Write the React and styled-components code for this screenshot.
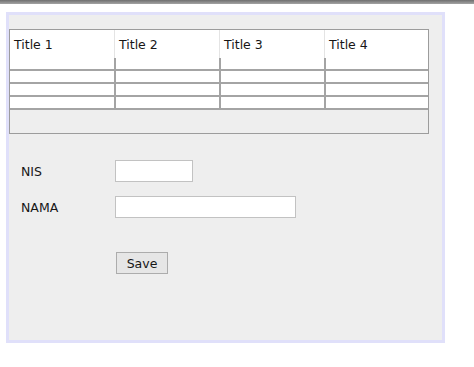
import React from 'react';
import styled, { createGlobalStyle } from 'styled-components';

const GlobalStyle = createGlobalStyle`
  html, body {
    margin: 0;
    padding: 0;
    background: #fff;
  }
  body {
    font-family: "DejaVu Sans", "Liberation Sans", sans-serif;
    font-size: 12.5px;
    color: #161616;
  }
`;

const TopBar = styled.div`
  height: 4px;
  background: linear-gradient(#6f6f6f, #a4a4a4);
`;

const Frame = styled.div`
  box-sizing: border-box;
  width: 439px;
  height: 331px;
  margin: 8px 0 0 6px;
  border: 3px solid #e0e0fa;
  background: #eeeeee;
  padding-top: 14px;
`;

const ScrollPane = styled.div`
  box-sizing: border-box;
  width: 420px;
  height: 105px;
  border: 1px solid #9c9c9c;
  background: #eeeeee;
`;

const Grid = styled.div`
  display: grid;
  grid-template-columns: 104px 105px 105px 104px;
`;

const HeadCell = styled.div`
  box-sizing: border-box;
  height: 28px;
  display: flex;
  align-items: center;
  padding-left: 4px;
  background: #fff;
  border-left: ${(p) => (p.first ? 'none' : '1px solid #e4e4e4')};
`;

const Cell = styled.div`
  box-sizing: border-box;
  height: 13px;
  background: #fff;
  border-bottom: 2px solid #a4a4a4;
  border-left: ${(p) => (p.first ? 'none' : '2px solid #a4a4a4')};
`;

const Form = styled.div`
  display: flex;
  flex-direction: column;
  gap: 14px;
  padding: 26px 0 0 12px;
`;

const Row = styled.div`
  display: grid;
  grid-template-columns: 94px auto;
  align-items: center;
`;

const Label = styled.span``;

const Input = styled.input`
  box-sizing: border-box;
  width: ${(p) => p.w}px;
  height: 22px;
  margin: 0;
  border: 1px solid #c2c2c2;
  background: #fff;
  outline: none;
`;

const ButtonRow = styled.div`
  padding: 20px 0 0 95px;
`;

const Button = styled.button`
  box-sizing: border-box;
  width: 52px;
  height: 22px;
  margin: 0;
  padding: 0;
  border: 1px solid #acacac;
  background: #e6e6e6;
  font-family: inherit;
  font-size: 12.5px;
  color: #161616;
`;

export default function App() {
  const titles = ['Title 1', 'Title 2', 'Title 3', 'Title 4'];
  const rows = [0, 1, 2, 3];

  return (
    <>
      <GlobalStyle />
      <TopBar />
      <Frame>
        <ScrollPane>
          <Grid>
            {titles.map((t, i) => (
              <HeadCell key={t} first={i === 0}>{t}</HeadCell>
            ))}
            {rows.map((r) =>
              titles.map((t, i) => <Cell key={r + t} first={i === 0} />)
            )}
          </Grid>
        </ScrollPane>
        <Form>
          <Row>
            <Label>NIS</Label>
            <Input w={78} />
          </Row>
          <Row>
            <Label>NAMA</Label>
            <Input w={181} />
          </Row>
          <ButtonRow>
            <Button>Save</Button>
          </ButtonRow>
        </Form>
      </Frame>
    </>
  );
}
